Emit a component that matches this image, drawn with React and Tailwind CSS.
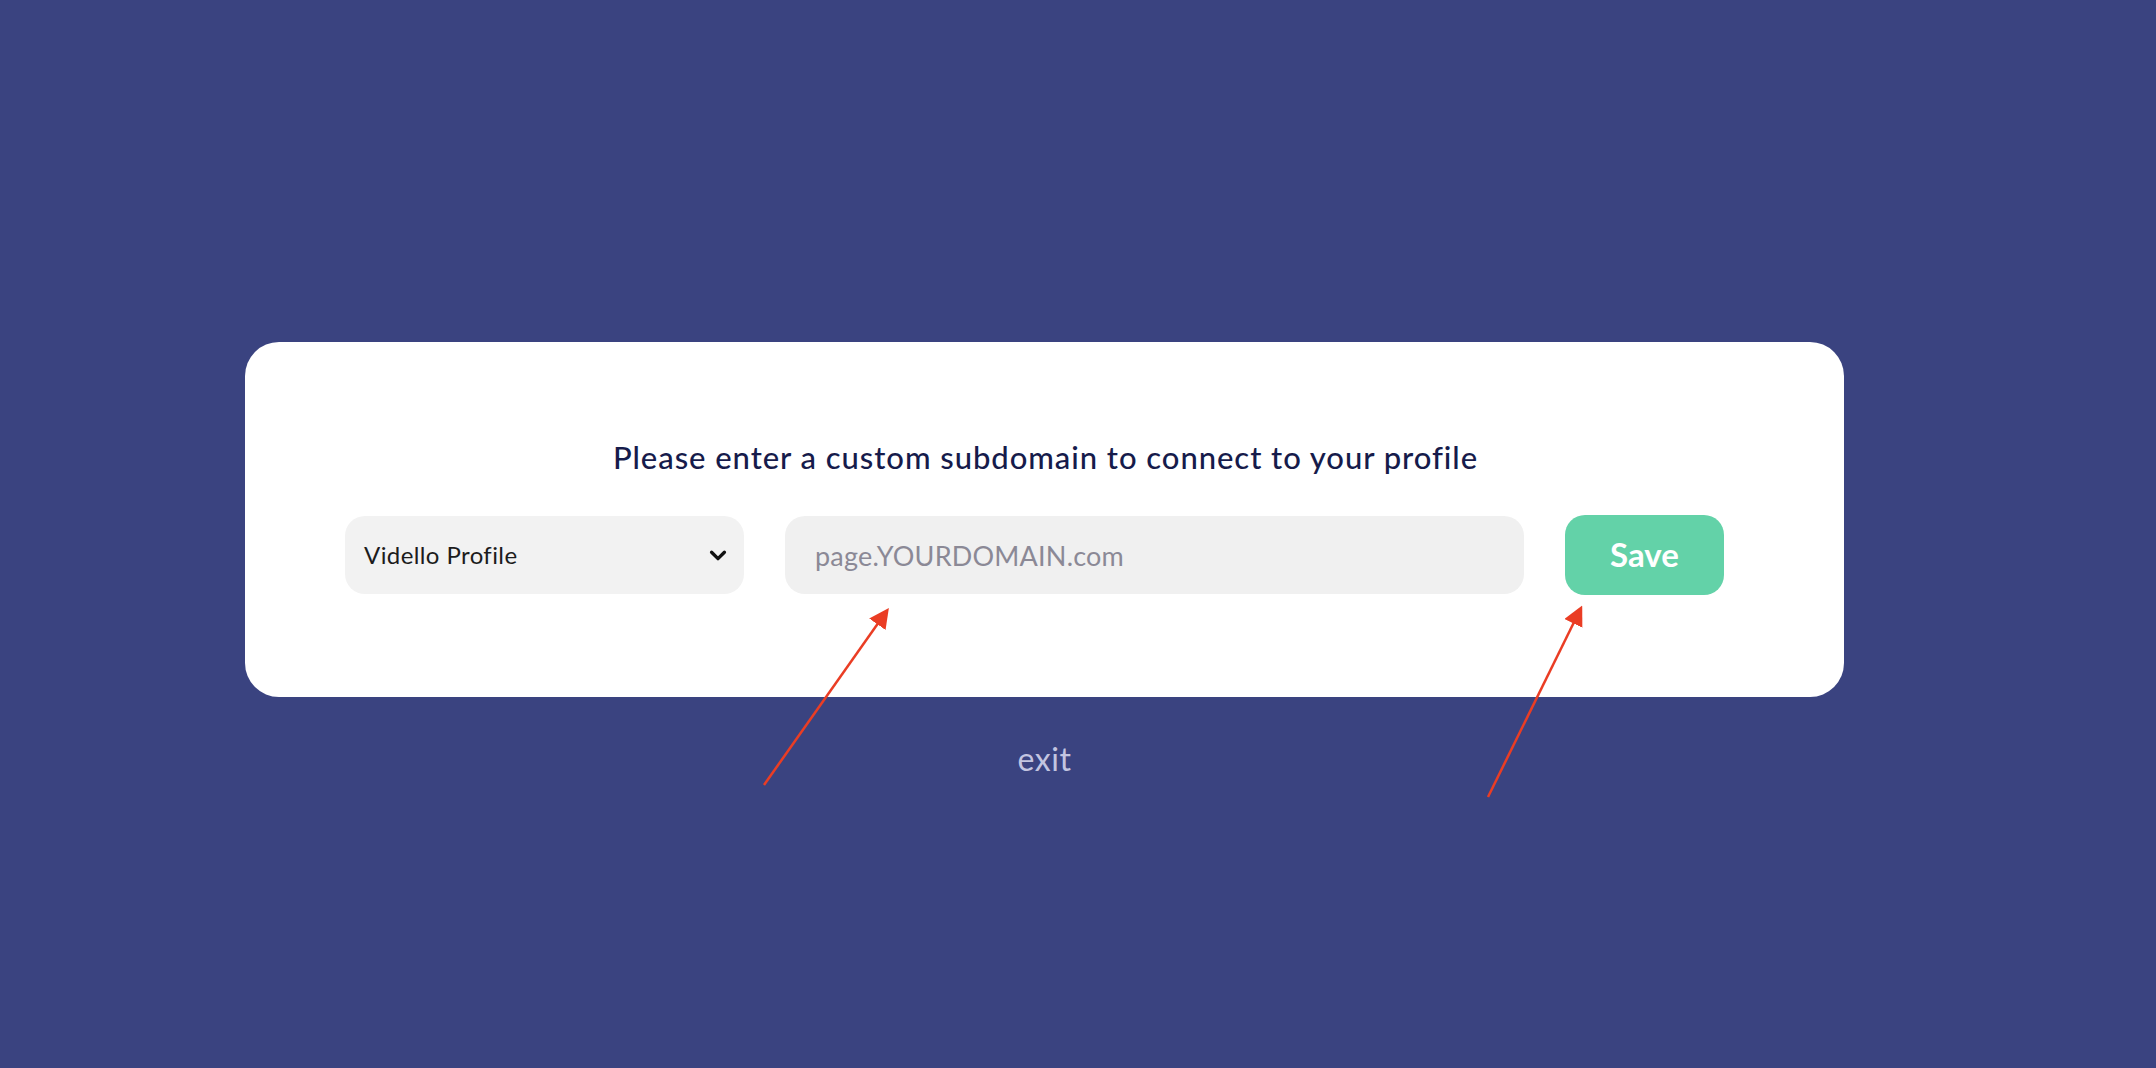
import { useState } from 'react';

export default function App() {
    const [domain, setDomain] = useState('');

    return (
        <div className="relative min-h-screen w-full bg-[#3a4380] font-['Lato',sans-serif]">
            <div className="ml-[245px] pt-[342px] w-[1599px] flex flex-col items-center">
                <div className="w-full rounded-[34px] bg-white pt-[95px] pb-[102px] pl-[100px] pr-[120px]">
                    <h2 className="pl-[22px] text-center text-[31px] leading-[40px] font-medium text-[#161b4b] tracking-[0.95px]">
                        Please enter a custom subdomain to connect to your profile
                    </h2>
                    <div className="mt-[38px] flex items-center gap-[41px]">
                        <div className="flex h-[78px] w-[399px] items-center justify-between rounded-[20px] bg-[#f2f2f2] pl-[19px] pr-[15px]">
                            <span className="text-[24px] tracking-[0.4px] text-[#1c1c1c]">Vidello Profile</span>
                            <svg width="22" height="22" viewBox="0 0 24 24" fill="none" stroke="#111" strokeWidth="3.6" strokeLinecap="round" strokeLinejoin="round">
                                <path d="M5 9l7 7 7-7" />
                            </svg>
                        </div>
                        <input
                            type="text"
                            placeholder="page.YOURDOMAIN.com"
                            value={domain}
                            onChange={e => setDomain(e.target.value)}
                            className="h-[78px] flex-1 rounded-[20px] bg-[#f0f0f0] px-[30px] text-[27px] tracking-[0.2px] text-[#333] placeholder:text-[#8b8996] outline-none"
                        />
                        <button className="h-[80px] w-[159px] rounded-[20px] bg-[#63d2a8] text-[33px] font-bold text-white">
                            Save
                        </button>
                    </div>
                </div>
                <button className="mt-[38px] text-[32px] tracking-[0.5px] text-[#c3c5e0]">exit</button>
            </div>

            <svg className="absolute left-0 top-0 pointer-events-none" width="2156" height="1068">
                <defs>
                    <marker id="head" markerWidth="8" markerHeight="8" refX="6" refY="4" orient="auto" markerUnits="strokeWidth">
                        <path d="M0 0 L8 4 L0 8 z" fill="#ea3d24" />
                    </marker>
                </defs>
                <line x1="764" y1="785" x2="886" y2="612" stroke="#ea3d24" strokeWidth="2.5" markerEnd="url(#head)" />
                <line x1="1488" y1="797" x2="1580" y2="610" stroke="#ea3d24" strokeWidth="2.5" markerEnd="url(#head)" />
            </svg>
        </div>
    );
}
